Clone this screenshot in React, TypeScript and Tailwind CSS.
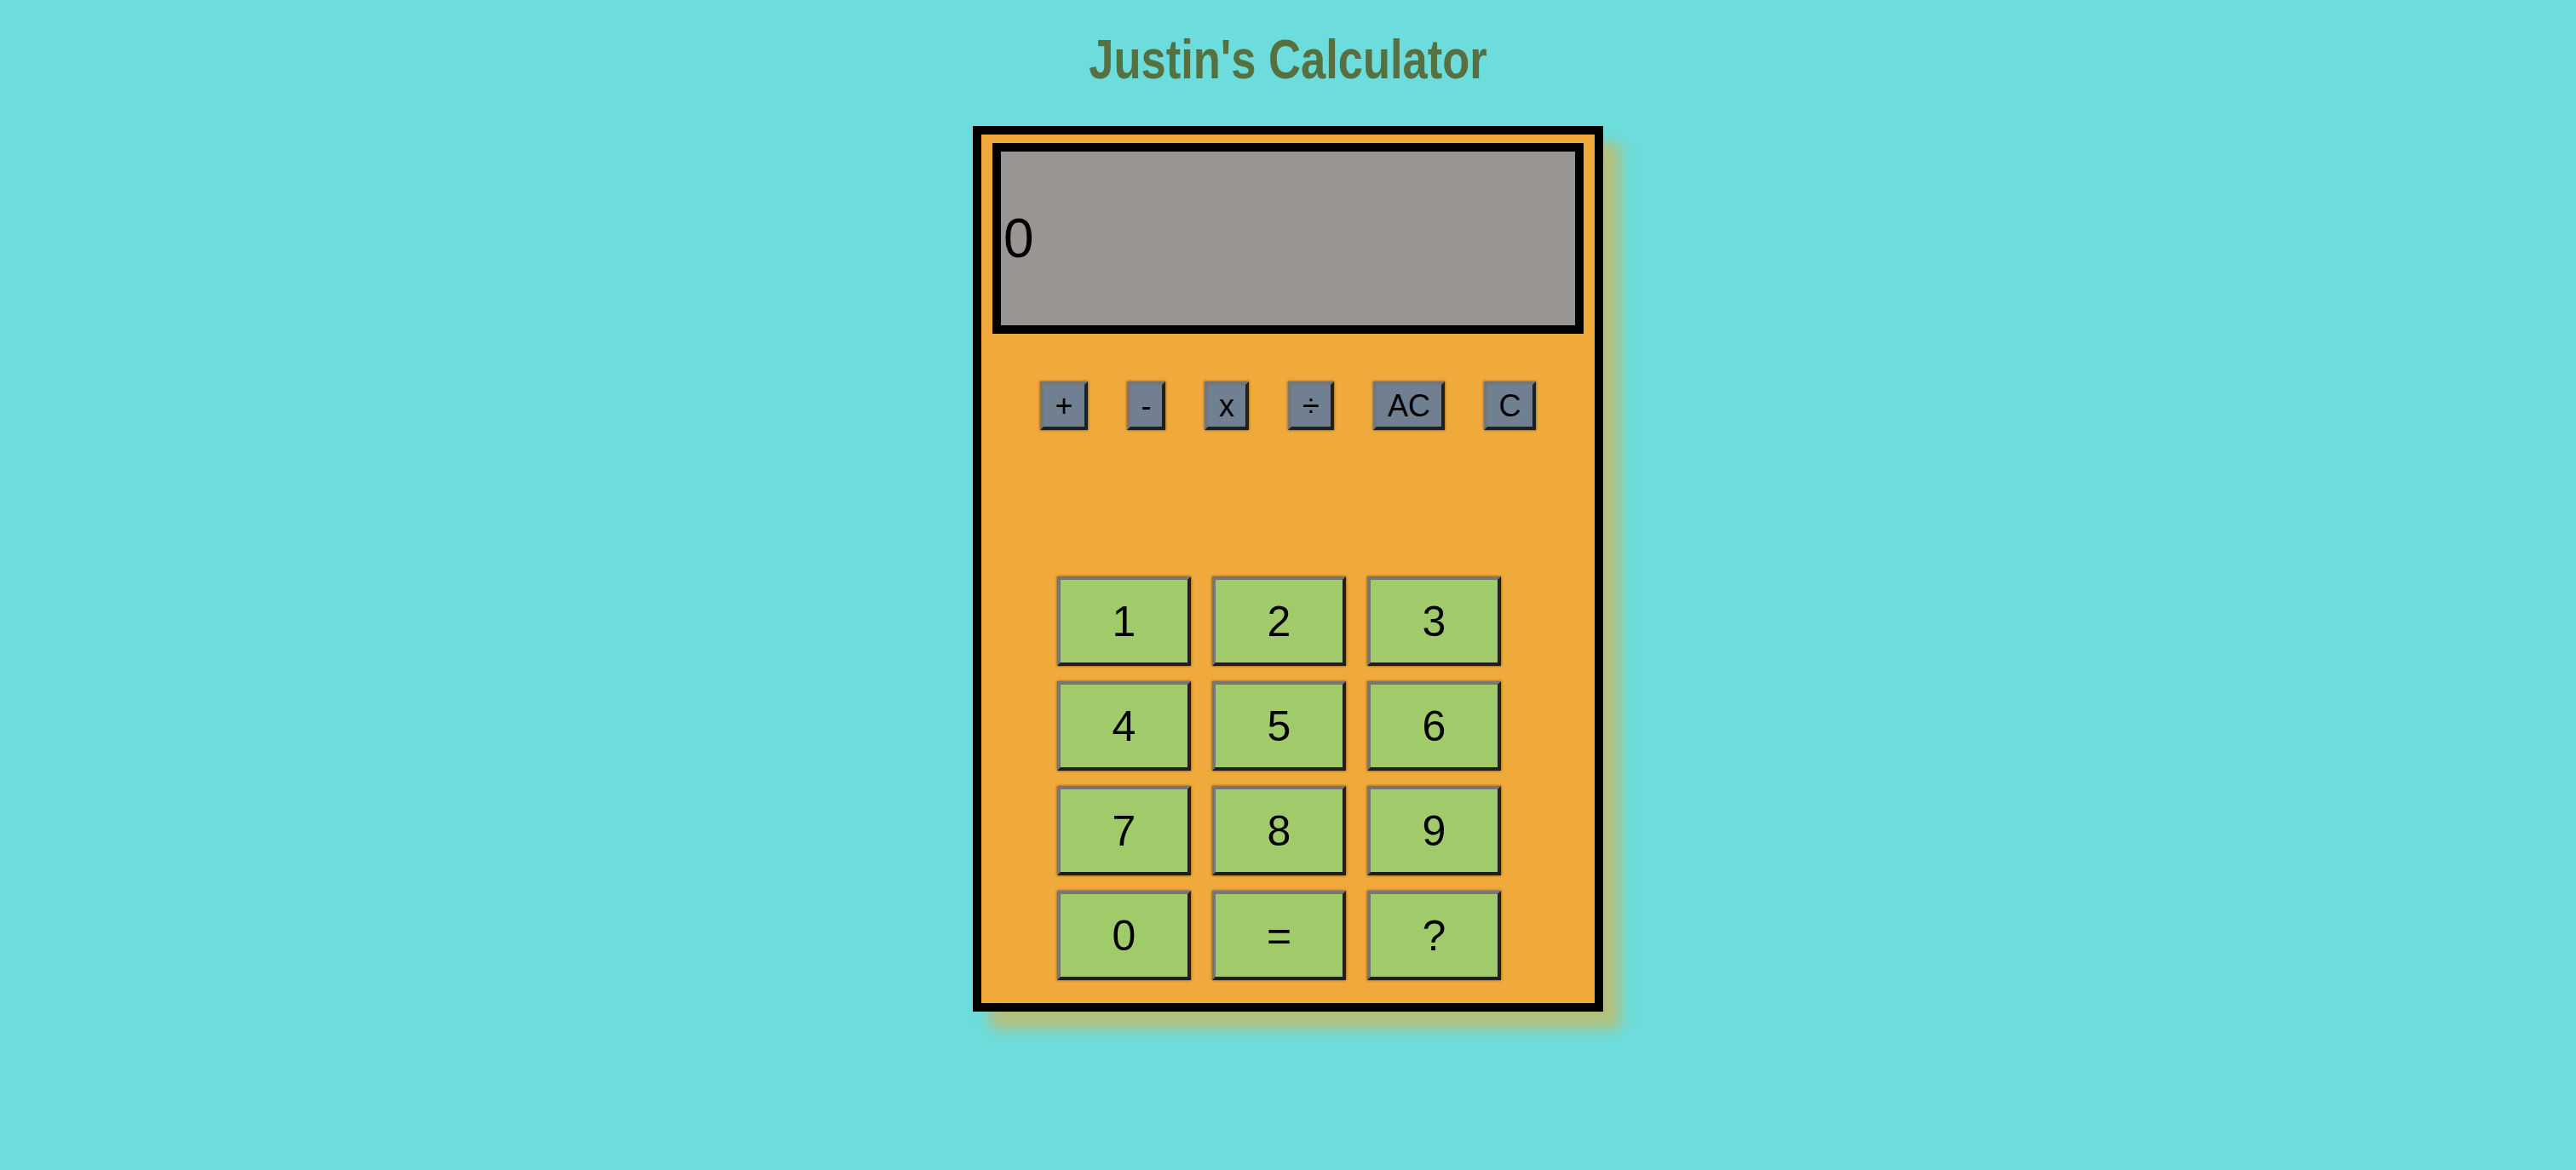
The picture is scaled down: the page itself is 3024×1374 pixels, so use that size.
import React from "react";

// ─── Data ─────────────────────────────────────────────────────────────────────

const OPERATORS = [
  { label: "+", width: "w-[56px]" },
  { label: "-", width: "w-[45px]" },
  { label: "x", width: "w-[52px]" },
  { label: "÷", width: "w-[54px]" },
  { label: "AC", width: "w-[84px]" },
  { label: "C", width: "w-[61px]" },
];

const KEYS = ["1", "2", "3", "4", "5", "6", "7", "8", "9", "0", "=", "?"];

// raised look: light top/left edge, dark bottom/right edge
const RAISED =
  "border-4 border-t-[#767676] border-l-[#767676] border-b-[#1f1f1f] border-r-[#1f1f1f] shadow-[0_0_3px_rgba(0,0,0,0.55)]";

// ─── Component ────────────────────────────────────────────────────────────────

export default function App() {
  return (
    <div className="min-h-screen bg-[#6cdcdc] font-['Liberation_Sans',Arial,sans-serif] text-black">
      {/* narrow bold title; no condensed face installed, so squeeze it */}
      <h1 className="pt-[33px] mb-[41px] text-center text-[64px] font-bold leading-[normal] text-[#56703f]">
        <span className="inline-block scale-x-[0.82]">Justin's Calculator</span>
      </h1>

      {/* ── Calculator body ── */}
      <div className="mx-auto w-[740px] border-[10px] border-black bg-[#f0a93b] pt-[10px] pb-[27px] shadow-[20px_20px_15px_#b6bf7c]">
        {/* Display */}
        <div className="mx-auto flex h-[224px] w-[694px] items-center border-[10px] border-black bg-[#999593] pl-[3px] text-[64px] leading-none">
          0
        </div>

        {/* Operators */}
        <div className="mt-[56px] flex justify-center gap-[46px]">
          {OPERATORS.map((op) => (
            <button
              key={op.label}
              className={`${op.width} ${RAISED} flex h-[57px] items-center justify-center bg-[#708090] text-[36px] leading-none`}
            >
              {op.label}
            </button>
          ))}
        </div>

        {/* Number pad */}
        <div className="mt-[172px] grid grid-cols-[157px_157px_157px] gap-x-[25px] gap-y-[18px] pl-[89px]">
          {KEYS.map((k) => (
            <button
              key={k}
              className={`${RAISED} flex h-[105px] items-center justify-center bg-[#a1cb6a] text-[50px] leading-none`}
            >
              {k}
            </button>
          ))}
        </div>
      </div>
    </div>
  );
}
